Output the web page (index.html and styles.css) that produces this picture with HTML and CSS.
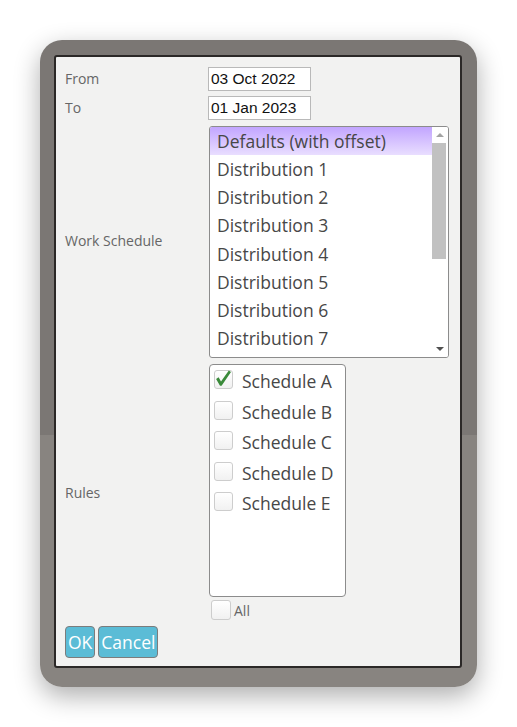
FILE: index.html
```html
<!DOCTYPE html>
<html>
<head>
<meta charset="utf-8">
<link rel="stylesheet" href="styles.css">
</head>
<body>
<div class="frame">
  <div class="dialog">
    <div class="form">
      <div class="label">From</div>
      <div class="field"><input class="date" type="text" value="03 Oct 2022"></div>

      <div class="label">To</div>
      <div class="field"><input class="date" type="text" value="01 Jan 2023"></div>

      <div class="label">Work Schedule</div>
      <div class="field f-ws">
        <div class="listbox">
          <div class="items">
            <div class="item selected">Defaults (with offset)</div>
            <div class="item">Distribution 1</div>
            <div class="item">Distribution 2</div>
            <div class="item">Distribution 3</div>
            <div class="item">Distribution 4</div>
            <div class="item">Distribution 5</div>
            <div class="item">Distribution 6</div>
            <div class="item">Distribution 7</div>
          </div>
          <div class="scrollbar">
            <div class="sb-btn"><span class="arrow-up"></span></div>
            <div class="thumb"></div>
            <div class="sb-fill"></div>
            <div class="sb-btn"><span class="arrow-down"></span></div>
          </div>
        </div>
      </div>

      <div class="label label-rules">Rules</div>
      <div class="field f-rules">
        <div class="rulebox">
          <div class="rule"><span class="cb checked"><svg viewBox="0 0 19 19" width="19" height="19"><path d="M2.1 8.9 L4.6 7.3 L7.0 11.6 L14.8 0.4 L17.0 1.9 L7.6 15.8 L6.0 15.8 Z" fill="#3a8a3a"/></svg></span><span class="rtext">Schedule A</span></div>
          <div class="rule"><span class="cb"></span><span class="rtext">Schedule B</span></div>
          <div class="rule"><span class="cb"></span><span class="rtext">Schedule C</span></div>
          <div class="rule"><span class="cb"></span><span class="rtext">Schedule D</span></div>
          <div class="rule"><span class="cb"></span><span class="rtext">Schedule E</span></div>
        </div>
        <div class="all"><span class="cb all-cb"></span><span class="all-text">All</span></div>
      </div>

      <div class="buttons">
        <button class="btn">OK</button><button class="btn">Cancel</button>
      </div>
    </div>
  </div>
</div>
</body>
</html>
```
FILE: styles.css
```css
html, body {
  margin: 0;
  padding: 0;
  background: #ffffff;
}
body {
  width: 517px;
  height: 727px;
  overflow: hidden;
  font-family: "Open Sans", "Noto Sans", sans-serif;
}
.frame {
  box-sizing: border-box;
  margin: 40px 0 0 40px;
  width: 437px;
  height: 647px;
  border-radius: 22px;
  background: linear-gradient(to bottom, #7b7774 0, #7b7774 395px, #888480 395px, #888480 100%);
  box-shadow: 0 9px 26px rgba(0, 0, 0, 0.32);
  padding: 15px 15px 19px 14px;
}
.dialog {
  box-sizing: border-box;
  height: 100%;
  background: #f2f2f1;
  border: 2px solid #2b2827;
  border-radius: 3px;
  padding: 10px 9px 0 9px;
}
.form {
  display: grid;
  grid-template-columns: 143px 1fr;
  row-gap: 5px;
}
.label {
  align-self: center;
  font-size: 14px;
  color: #666666;
  padding-bottom: 2px;
}
.label-rules { padding-bottom: 0; padding-top: 2px; }
.f-ws { padding-top: 1px; }
.f-rules { padding-top: 1px; }
.date {
  box-sizing: border-box;
  display: block;
  width: 103px;
  height: 24px;
  margin: 0;
  border: 1px solid #b9b9b9;
  background: #ffffff;
  padding: 0 2px;
  font-family: "Liberation Sans", Arial, sans-serif;
  font-size: 15.5px;
  color: #111111;
  outline: none;
}
.listbox {
  box-sizing: border-box;
  margin-left: 1px;
  width: 240px;
  height: 232px;
  border: 1px solid #8c8c8c;
  border-radius: 3px;
  background: #ffffff;
  display: flex;
  overflow: hidden;
}
.items {
  flex: 1;
  overflow: hidden;
}
.item {
  height: 28.15px;
  line-height: 28px;
  padding-left: 7px;
  font-size: 17.5px;
  color: #474747;
  white-space: nowrap;
}
.item.selected {
  background: linear-gradient(to bottom, #c2a5ff, #e9deff);
}
.scrollbar {
  width: 16px;
  display: flex;
  flex-direction: column;
  background: #ffffff;
}
.sb-btn {
  height: 16px;
  display: flex;
  align-items: center;
  justify-content: center;
}
.arrow-up {
  width: 0;
  height: 0;
  border-left: 4px solid transparent;
  border-right: 4px solid transparent;
  border-bottom: 4px solid #a3a3a3;
}
.arrow-down {
  width: 0;
  height: 0;
  border-left: 4px solid transparent;
  border-right: 4px solid transparent;
  border-top: 4px solid #505050;
}
.thumb {
  height: 116px;
  width: 14px;
  background: #c1c1c1;
}
.sb-fill { flex: 1; }
.rulebox {
  box-sizing: border-box;
  margin-left: 1px;
  width: 137px;
  height: 233px;
  border: 1px solid #8c8c8c;
  border-radius: 4px;
  background: #ffffff;
  padding: 4px 0 0 4px;
}
.rule {
  height: 30.5px;
  display: flex;
  align-items: flex-start;
}
.cb {
  box-sizing: border-box;
  display: block;
  width: 19px;
  height: 19px;
  margin-top: 1px;
  border: 1px solid #cdcdcd;
  border-radius: 3px;
  background: linear-gradient(to bottom, #ffffff, #f1f1f1);
  flex: none;
}
.cb svg {
  display: block;
  margin: -1px 0 0 -1px;
}
.rtext {
  margin-left: 9px;
  line-height: 24px;
  font-size: 17.5px;
  color: #474747;
}
.all {
  display: flex;
  align-items: center;
  margin: 3px 0 0 3px;
}
.all-cb {
  width: 20px;
  height: 20px;
  margin-top: 0;
}
.all-text {
  margin-left: 3px;
  font-size: 14px;
  color: #666666;
}
.buttons {
  grid-column: 1 / 3;
  display: flex;
  gap: 3px;
  margin-top: 1px;
}
.btn {
  box-sizing: border-box;
  height: 32px;
  margin: 0;
  padding: 0 2px;
  border: 1px solid #7c7c7c;
  border-radius: 4px;
  background: #5bbcd6;
  color: #ffffff;
  font-family: "Open Sans", "Noto Sans", sans-serif;
  font-size: 17.5px;
  line-height: 30px;
}
```
